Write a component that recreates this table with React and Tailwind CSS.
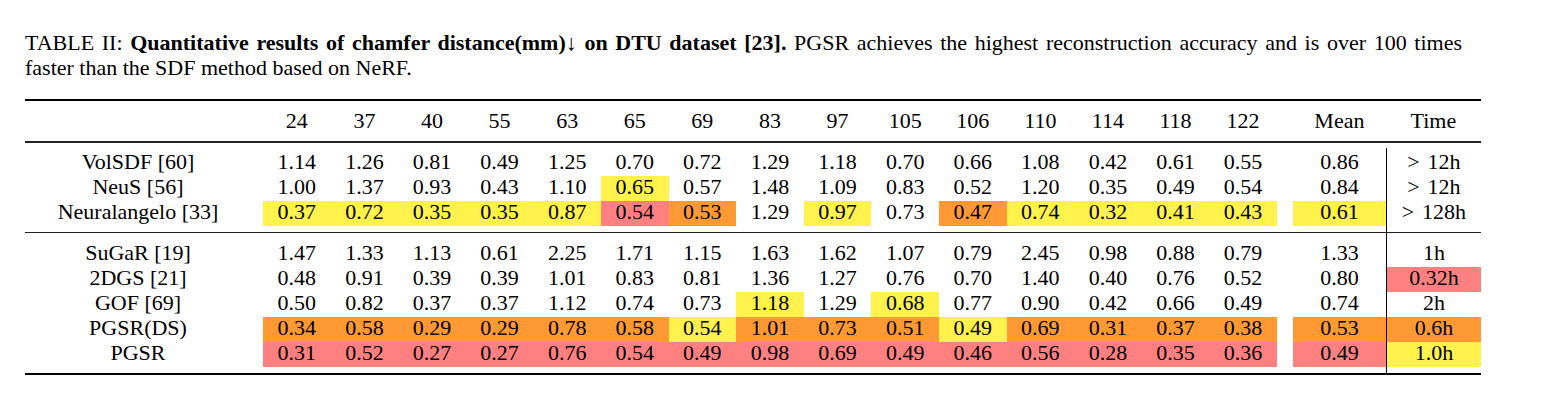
import clsx from "clsx";

const colors = {
  y: "bg-[#fff24d]",
  o: "bg-[#ff9933]",
  p: "bg-[#ff8080]",
};

const scenes = ["24", "37", "40", "55", "63", "65", "69", "83", "97", "105", "106", "110", "114", "118", "122"];

// trailing y / o / p marks the cell colour
const groupA = [
  ["VolSDF [60]", "1.14 1.26 0.81 0.49 1.25 0.70 0.72 1.29 1.18 0.70 0.66 1.08 0.42 0.61 0.55", "0.86", "> 12h"],
  ["NeuS [56]", "1.00 1.37 0.93 0.43 1.10 0.65y 0.57 1.48 1.09 0.83 0.52 1.20 0.35 0.49 0.54", "0.84", "> 12h"],
  ["Neuralangelo [33]", "0.37y 0.72y 0.35y 0.35y 0.87y 0.54p 0.53o 1.29 0.97y 0.73 0.47o 0.74y 0.32y 0.41y 0.43y", "0.61y", "> 128h"],
];

const groupB = [
  ["SuGaR [19]", "1.47 1.33 1.13 0.61 2.25 1.71 1.15 1.63 1.62 1.07 0.79 2.45 0.98 0.88 0.79", "1.33", "1h"],
  ["2DGS [21]", "0.48 0.91 0.39 0.39 1.01 0.83 0.81 1.36 1.27 0.76 0.70 1.40 0.40 0.76 0.52", "0.80", "0.32hp"],
  ["GOF [69]", "0.50 0.82 0.37 0.37 1.12 0.74 0.73 1.18y 1.29 0.68y 0.77 0.90 0.42 0.66 0.49", "0.74", "2h"],
  ["PGSR(DS)", "0.34o 0.58o 0.29o 0.29o 0.78o 0.58o 0.54y 1.01o 0.73o 0.51o 0.49y 0.69o 0.31o 0.37o 0.38o", "0.53o", "0.6ho"],
  ["PGSR", "0.31p 0.52p 0.27p 0.27p 0.76p 0.54p 0.49p 0.98p 0.69p 0.49p 0.46p 0.56p 0.28p 0.35p 0.36p", "0.49p", "1.0hy"],
];

function Cell({ v, className }) {
  const c = colors[v.slice(-1)];
  const text = c ? v.slice(0, -1) : v;
  return (
    <div className={clsx("h-[25px] text-center leading-[22px]", c, className)}>
      {text.startsWith("> ") ? (
        <>
          <span>&gt;</span>
          <span className="ml-[8px]">{text.slice(2)}</span>
        </>
      ) : (
        text
      )}
    </div>
  );
}

function Row({ name, vals, mean, time }) {
  return (
    <div className="flex h-[25px]">
      <div className="w-[238px] pr-[12px] text-center leading-[22px]">{name}</div>
      {vals.split(" ").map((v, i) => (
        <Cell key={i} v={v} className="w-[67.6px]" />
      ))}
      <div className="w-[16px]" />
      <Cell v={mean} className="w-[93px]" />
      <Cell v={time} className="w-[95px] border-l border-black" />
    </div>
  );
}

function Gap({ h, line }) {
  return (
    <div className={clsx("flex", h)}>
      <div className="w-[1361px]" />
      {line && <div className="w-[95px] border-l border-black" />}
    </div>
  );
}

export default function App() {
  return (
    <div className="w-[1545px] h-[405px] bg-white text-black font-['Liberation_Serif',serif] text-[22px] leading-[25px]">
      <div className="ml-[25px] w-[1437px] pt-[30px]">
        <div className="text-justify [text-align-last:justify]">
          TABLE II: <b>Quantitative results of chamfer distance(mm)↓ on DTU dataset [23].</b> PGSR achieves the
          highest reconstruction accuracy and is over 100 times
        </div>
        <div>faster than the SDF method based on NeRF.</div>
      </div>

      <div className="ml-[25px] mt-[19px] w-[1456px]">
        <div className="h-[2px] bg-black" />
        <div className="h-[9px]" />
        <div className="flex h-[25px] leading-[22px]">
          <div className="w-[238px]" />
          {scenes.map((s) => (
            <div key={s} className="w-[67.6px] text-center">
              {s}
            </div>
          ))}
          <div className="w-[16px]" />
          <div className="w-[93px] text-center">Mean</div>
          <div className="w-[95px] text-center">Time</div>
        </div>
        <div className="h-[6px]" />
        <div className="h-[1.5px] bg-[#222]" />
        <div className="flex flex-col">
          <div className="h-[5px]" />
          <Gap h="h-[3px]" line />
          {groupA.map(([n, v, m, t]) => (
            <Row key={n} name={n} vals={v} mean={m} time={t} />
          ))}
          <Gap h="h-[6px]" line />
        </div>
        <div className="h-[1.5px] bg-[#222]" />
        <Gap h="h-[9px]" line />
        {groupB.map(([n, v, m, t]) => (
          <Row key={n} name={n} vals={v} mean={m} time={t} />
        ))}
        <Gap h="h-[6px]" line />
        <div className="h-[2px] bg-black" />
      </div>
    </div>
  );
}
